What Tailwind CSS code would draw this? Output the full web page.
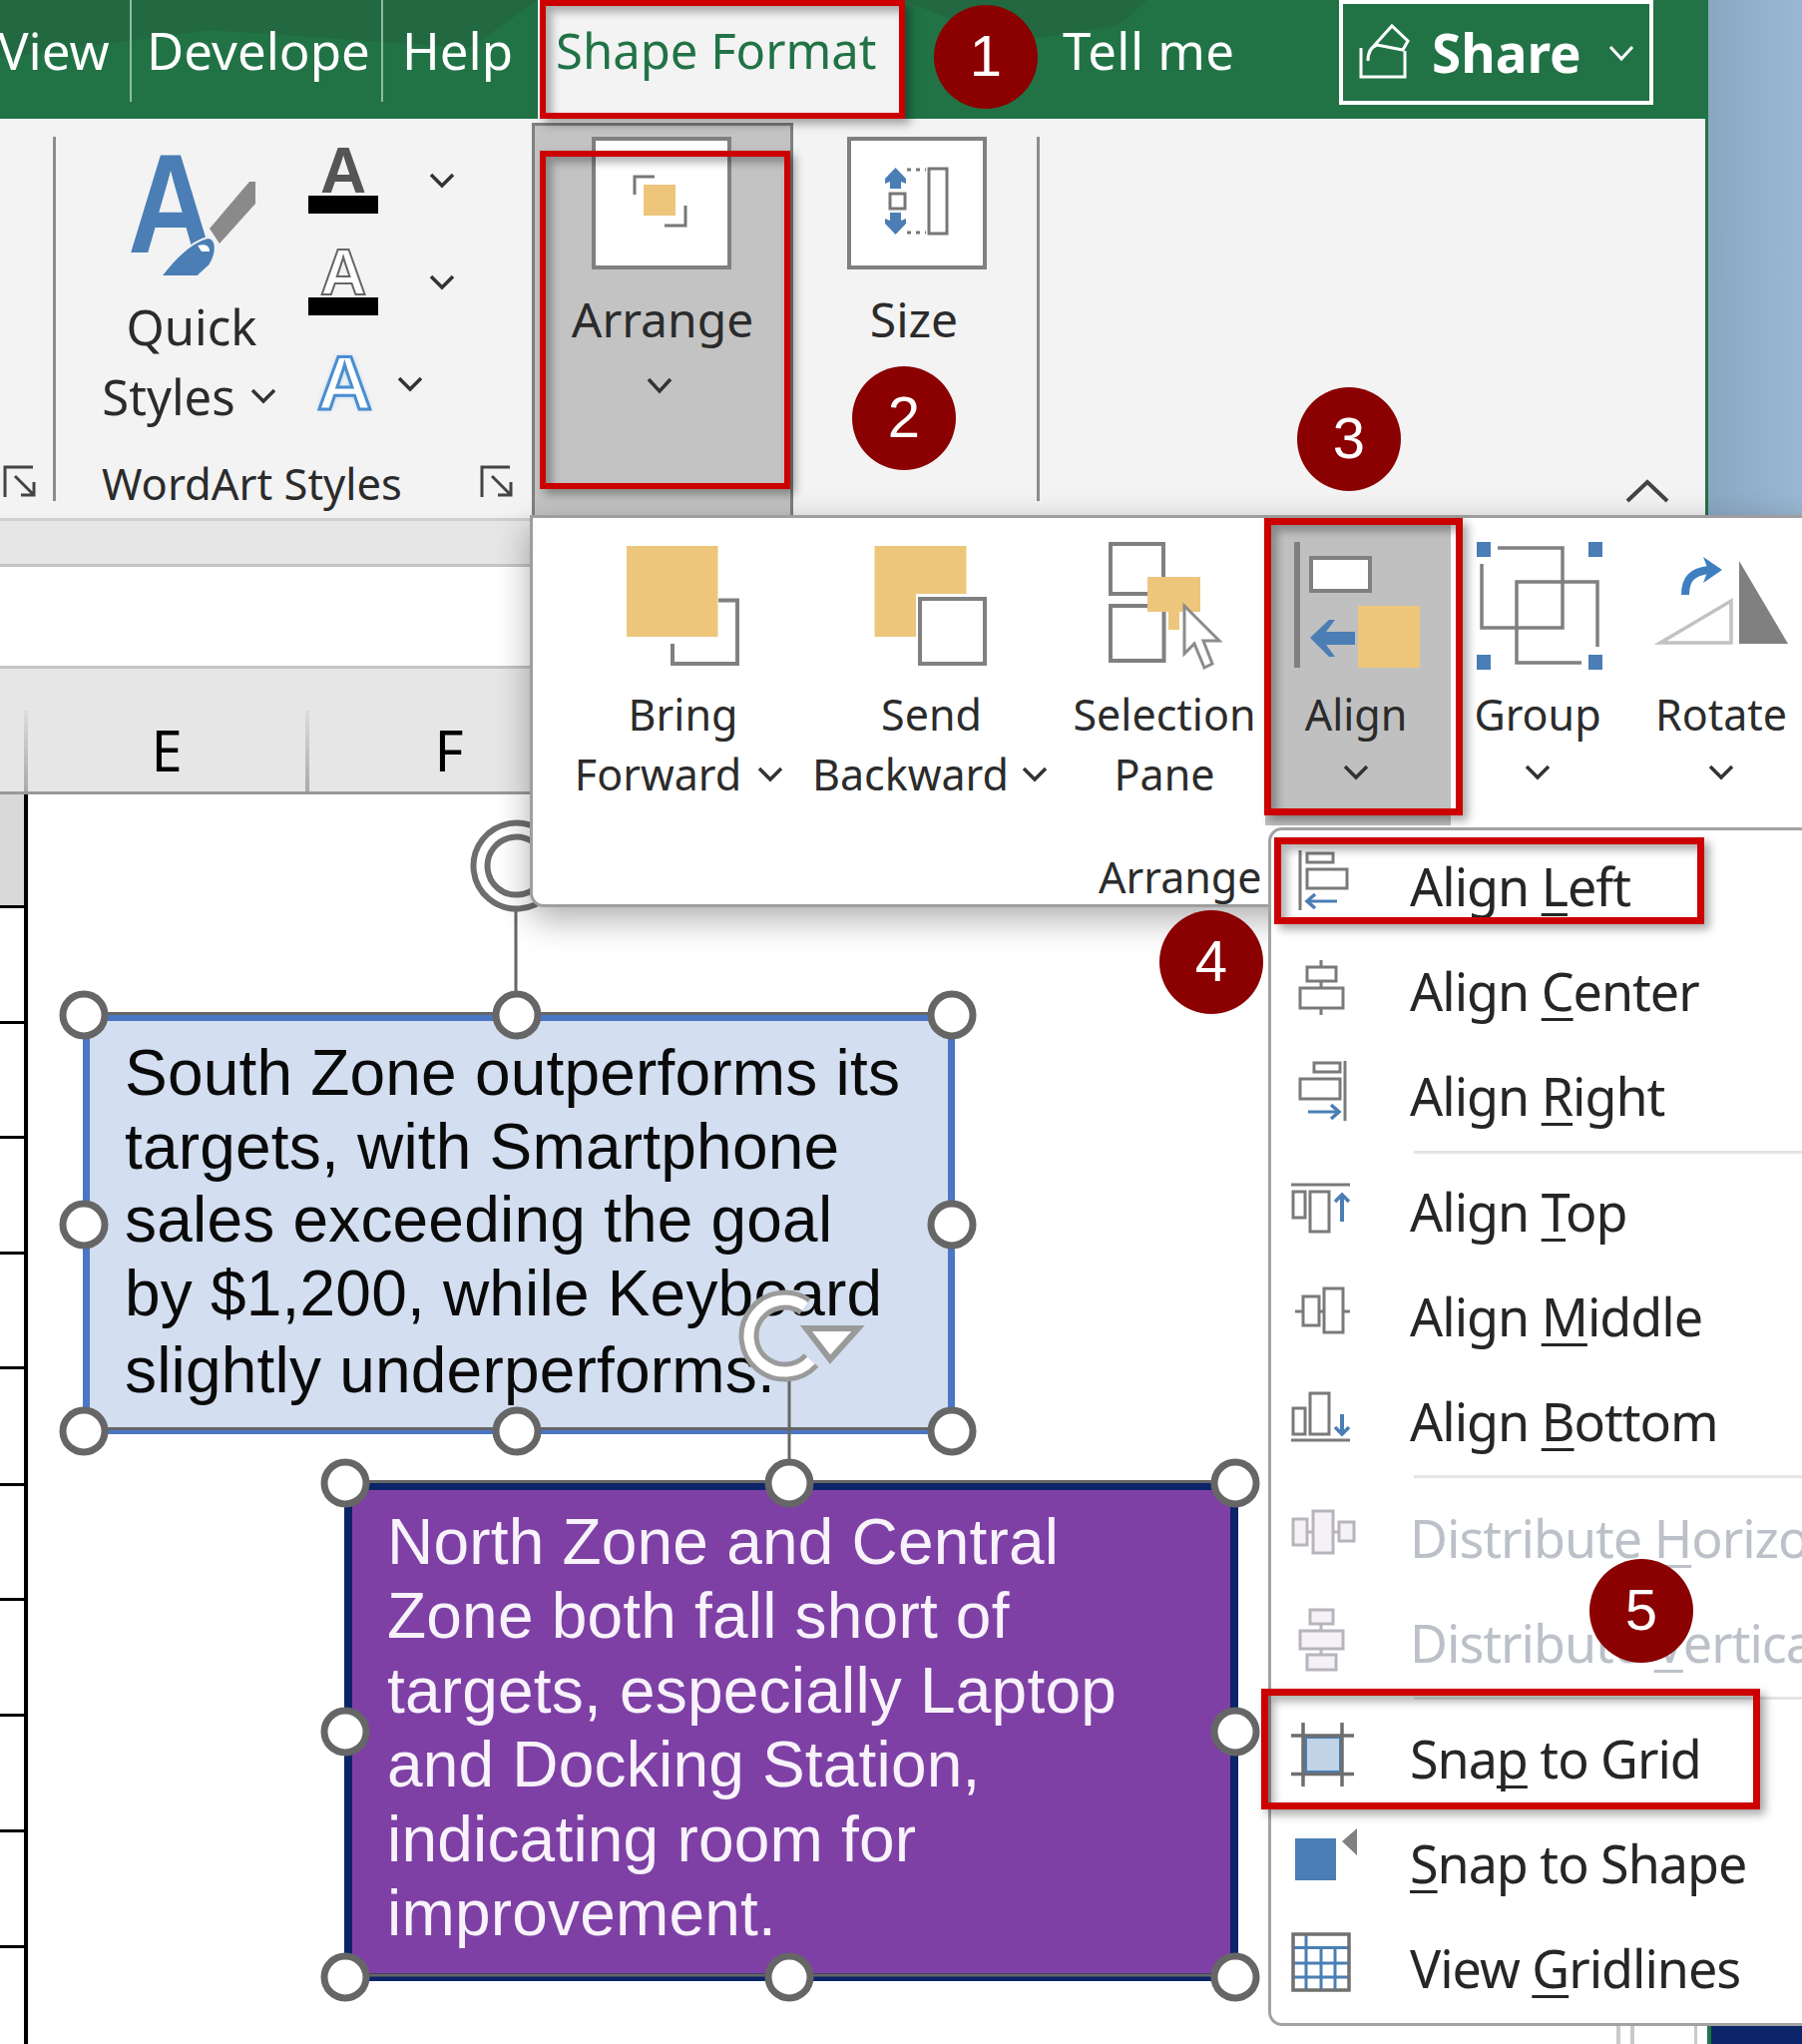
<!DOCTYPE html>
<html lang="en">
<head>
<meta charset="UTF-8">
<title>Shape Format - Align</title>
<script src="https://cdn.jsdelivr.net/npm/@tailwindcss/browser@4"></script>
</head>
<body class="bg-white">
<div class="relative w-[1806px] h-[2048px] overflow-hidden bg-white font-['Noto_Sans',sans-serif] text-[#2b2b2b]">

  <!-- title + ribbon -->
  <div class="flex h-[516px]">
    <div class="w-[1712px] flex flex-col">
      <!-- tabs -->
      <div class="relative flex h-[119px] shrink-0 bg-[#217346] text-[51px] leading-[100px] text-white overflow-hidden">
        <svg class="absolute left-0 top-0 w-[1712px] h-[119px]" viewBox="0 0 1712 119"><polygon points="0,0 540,0 470,48 210,30 0,58" fill="#25603f" fill-opacity=".55"/><polygon points="905,0 1150,0 1120,26 1010,42" fill="#25603f" fill-opacity=".55"/></svg>
        <span class="relative w-[132px] ml-[-2px] shrink-0 pl-0">View</span>
        <span class="relative w-[2px] h-[102px] shrink-0 bg-[#8dbb9f]"></span>
        <span class="relative w-[250px] pl-[15px] shrink-0">Develope</span>
        <span class="relative w-[2px] h-[102px] shrink-0 bg-[#8dbb9f]"></span>
        <span class="relative w-[155px] pl-[19px] shrink-0">Help</span>
        <span class="relative w-[363px] h-[119px] pl-[18px] shrink-0 bg-[#f3f3f3] text-[49px] text-[#217346]">Shape Format</span>
        <span class="relative w-[440px] pl-[163px] shrink-0 tracking-[0.4px]">Tell me</span>
        <div class="relative flex items-center w-[315px] h-[105px] shrink-0 border-[4px] border-white">
          <svg class="ml-[16px] w-[54px] h-[60px] shrink-0" viewBox="0 0 54 60" fill="none" stroke="#fff" stroke-width="3"><path d="M2 25V54H46V28"/><path d="M9 38C9 30 12 24 18 22L44 27L49 18L33 3L14 24"/></svg>
          <span class="ml-[19px] text-[53px] font-bold leading-[90px]">Share</span>
          <svg class="ml-[27px] w-[26px] h-[18px]" viewBox="0 0 26 18" fill="none" stroke="#fff" stroke-width="3"><path d="M2 3L13 15L24 3"/></svg>
        </div>
      </div>
      <!-- ribbon -->
      <div class="flex h-[397px] bg-[#f3f3f3] border-r-[3px] border-[#217346]">
        <div class="w-[53px] shrink-0 pt-[347px] pl-[3px]">
          <svg class="w-[34px] h-[34px]" viewBox="0 0 34 34" fill="none" stroke="#444" stroke-width="3"><path d="M2 32V2H30"/><path d="M12 11L30 29M18 30H31V17"/></svg>
        </div>
        <div class="w-[3px] h-[365px] mt-[18px] shrink-0 bg-[#8c8c8c]"></div>

        <div class="w-[477px] shrink-0 flex flex-col">
          <div class="flex h-[334px]">
            <div class="ml-[34px] w-[200px] pt-[35px] flex flex-col items-center text-[49px] leading-[70px]">
              <div class="relative w-[200px] h-[123px] shrink-0">
                <span class="absolute left-[30px] top-[-20px] font-['Liberation_Sans'] font-bold text-[141px] leading-[141px] text-[#4a7eb5] scale-x-[.84]">A</span>
                <svg class="absolute left-0 top-0 w-[200px] h-[123px]" viewBox="0 0 200 123"><polygon points="120,75 160,28 166,28 166,50 130,90" fill="#8a8a8a"/><path d="M71 123C84 106 102 88 118 84C128 84 128 100 120 112L108 123Z" fill="#4a7eb5" stroke="#f3f3f3" stroke-width="2"/><path d="M108 92C116 90 120 92 120 98L112 98Z" fill="#fff"/></svg>
              </div>
              <div class="mt-[15px] pl-[4px]">Quick</div>
              <div class="flex items-center gap-[14px]">Styles<svg class="w-[28px] h-[16px]" viewBox="0 0 28 16" fill="none" stroke="#333" stroke-width="3.5"><path d="M3 2L14 13L25 2"/></svg></div>
            </div>
            <div class="ml-[19px] pt-[29px] flex flex-col font-['Liberation_Sans'] font-bold">
              <div class="flex">
                <div class="w-[70px] flex flex-col items-center"><span class="h-[46px] text-[64px] leading-[46px] text-[#555]">A</span><span class="w-[70px] h-[18px] mt-[2px] bg-black"></span></div>
                <svg class="ml-[50px] mt-[25px] w-[28px] h-[16px]" viewBox="0 0 28 16" fill="none" stroke="#333" stroke-width="3.5"><path d="M3 2L14 13L25 2"/></svg>
              </div>
              <div class="flex mt-[36px]">
                <div class="w-[70px] flex flex-col items-center"><span class="h-[46px] text-[64px] leading-[46px] text-white [-webkit-text-stroke:2px_#666]">A</span><span class="w-[70px] h-[18px] mt-[2px] bg-black"></span></div>
                <svg class="ml-[50px] mt-[25px] w-[28px] h-[16px]" viewBox="0 0 28 16" fill="none" stroke="#333" stroke-width="3.5"><path d="M3 2L14 13L25 2"/></svg>
              </div>
              <div class="flex mt-[40px] ml-[9px]">
                <span class="w-[51px] h-[56px] text-center text-[76px] leading-[56px] text-white [-webkit-text-stroke:3px_#4a8ed0] [text-shadow:0_0_5px_#8fbce8]">A</span>
                <svg class="ml-[28px] mt-[21px] w-[28px] h-[16px]" viewBox="0 0 28 16" fill="none" stroke="#333" stroke-width="3.5"><path d="M3 2L14 13L25 2"/></svg>
              </div>
            </div>
          </div>
          <div class="flex text-[43.500px] leading-[62px] pl-[46px]">
            <span>WordArt Styles</span>
            <svg class="ml-auto mr-[18px] mt-[13px] w-[34px] h-[34px]" viewBox="0 0 34 34" fill="none" stroke="#444" stroke-width="3"><path d="M2 32V2H30"/><path d="M12 11L30 29M18 30H31V17"/></svg>
          </div>
        </div>

        <!-- Arrange button -->
        <div class="w-[262px] h-[393px] mt-[4px] shrink-0 flex flex-col items-center pt-[11px] bg-[#c3c3c3] border-[3px] border-b-0 border-[#7f7f7f] text-[48px] leading-[60px]">
          <div class="w-[140px] h-[133px] mr-[2px] bg-white border-[4px] border-[#808080] shrink-0">
            <svg class="w-[132px] h-[125px]" viewBox="0 0 132 125" fill="none"><path d="M39 54V36H59" stroke="#777" stroke-width="3"/><rect x="48" y="44" width="32" height="31" fill="#edc67c"/><path d="M69 85H90V65" stroke="#777" stroke-width="3"/></svg>
          </div>
          <div class="mt-[20px]">Arrange</div>
          <svg class="mt-[28px] mr-[6px] w-[28px] h-[18px]" viewBox="0 0 28 18" fill="none" stroke="#333" stroke-width="3.5"><path d="M3 2L14 14L25 2"/></svg>
        </div>

        <!-- Size -->
        <div class="w-[244px] shrink-0 flex flex-col items-center pt-[18px] text-[48px] leading-[60px]">
          <div class="w-[140px] h-[133px] ml-[4px] bg-white border-[4px] border-[#808080] shrink-0">
            <svg class="w-[132px] h-[125px]" viewBox="0 0 132 125"><polygon points="44.500,27 55,38 55,43 50,41 50,48 39,48 39,41 34,43 34,38" fill="#4a7eb5"/><rect x="39" y="53" width="15" height="15" fill="#fff" stroke="#777" stroke-width="3"/><polygon points="44.500,94 55,83 55,78 50,80 50,72 39,72 39,80 34,78 34,83" fill="#4a7eb5"/><path d="M56 29H75M56 92H75" stroke="#777" stroke-width="3" stroke-dasharray="4 5"/><rect x="78" y="28" width="18" height="65" fill="#fff" stroke="#777" stroke-width="3"/></svg>
          </div>
          <div class="mt-[20px] mr-[2px]">Size</div>
        </div>
        <div class="w-[3px] h-[365px] mt-[18px] shrink-0 bg-[#8c8c8c]"></div>
        <div class="flex-1 flex justify-end items-start pt-[361px] pr-[36px]">
          <svg class="w-[44px] h-[24px]" viewBox="0 0 44 24" fill="none" stroke="#444" stroke-width="4"><path d="M2 22L22 3L42 22"/></svg>
        </div>
      </div>
    </div>
    <div class="flex-1 bg-gradient-to-r from-[#8aa7c2] to-[#9ab8d4]"></div>
  </div>

  <!-- band under the ribbon -->
  <div class="h-[6px] bg-[#f0f0f0] border-b-[3px] border-[#cfcfcf]"></div>
  <div class="h-[46px] bg-[#e6e6e6] border-b-[3px] border-[#c4c4c4]"></div>
  <div class="h-[102px] bg-white border-b-[3px] border-[#c4c4c4]"></div>
  <!-- column header -->
  <div class="flex h-[126px] bg-[#e6e6e6] border-b-[3px] border-[#999] text-[56px] leading-[118px] text-black">
    <div class="w-[24px] shrink-0"></div>
    <div class="w-[4px] h-[81px] mt-[42px] shrink-0 bg-gradient-to-b from-[#dcdcdc] to-[#aaa]"></div>
    <div class="w-[278px] text-center pt-[22px]">E</div>
    <div class="w-[4px] h-[81px] mt-[42px] shrink-0 bg-gradient-to-b from-[#dcdcdc] to-[#aaa]"></div>
    <div class="w-[280px] text-center pt-[22px]">F</div>
  </div>
  <!-- row header -->
  <div class="flex">
    <div class="w-[28px] shrink-0 border-r-[4px] border-black h-[1253px]">
      <div class="h-[114px] bg-[#d9d9d9] border-b-[3px] border-black"></div>
      <div class="h-[116px] border-b-[3px] border-black"></div>
      <div class="h-[115px] border-b-[3px] border-black"></div>
      <div class="h-[116px] border-b-[3px] border-black"></div>
      <div class="h-[115px] border-b-[3px] border-black"></div>
      <div class="h-[117px] border-b-[3px] border-black"></div>
      <div class="h-[115px] border-b-[3px] border-black"></div>
      <div class="h-[116px] border-b-[3px] border-black"></div>
      <div class="h-[116px] border-b-[3px] border-black"></div>
      <div class="h-[116px] border-b-[3px] border-black"></div>
    </div>
  </div>

  <!-- what shows past the bottom of the menu -->
  <div class="absolute left-[1620px] top-[2028px] w-[4px] h-[20px] bg-[#c9c9c9]"></div>
  <div class="absolute left-[1634px] top-[2028px] w-[4px] h-[20px] bg-[#c9c9c9]"></div>
  <div class="absolute left-[1698px] top-[2028px] w-[3px] h-[20px] bg-[#c9c9c9]"></div>
  <div class="absolute left-[1711px] top-[2028px] w-[4px] h-[20px] bg-[#217346]"></div>
  <div class="absolute left-[1715px] top-[2028px] w-[91px] h-[20px] bg-[#0c2468]"></div>

  <!-- text boxes on the sheet -->
  <div class="absolute left-[83px] top-[1016px] w-[874px] h-[421px] bg-[#d3def0] border-[7px] border-[#4a76c4] pl-[35px] pt-[16px] font-['Liberation_Sans',sans-serif] text-[64px] tracking-[0.2px] leading-[73.600px] text-[#0a0a0a] whitespace-nowrap">South Zone outperforms its<br>targets, with Smartphone<br>sales exceeding the goal<br>by $1,200, while Keyboard<br><span class="block mt-[4px]">slightly underperforms.</span></div>
  <div class="absolute left-[345px] top-[1485px] w-[896px] h-[500px] bg-[#7e40a5] border-[8px] border-[#0c2468] pl-[35px] pt-[15px] font-['Liberation_Sans',sans-serif] text-[64px] tracking-[0.2px] leading-[74.400px] text-[#f8f2fb] whitespace-nowrap">North Zone and Central<br>Zone both fall short of<br>targets, especially Laptop<br>and Docking Station,<br>indicating room for<br>improvement.</div>

  <!-- selection handles -->
  <svg class="absolute left-0 top-0 w-[1806px] h-[2048px]" viewBox="0 0 1806 2048">
    <g stroke="#666" stroke-width="3" fill="none">
      <path d="M84 1015.500H953M84 1431.500H953"/>
      <path d="M346 1484.500H1238M346 1979H1238"/>
      <path d="M517 913V995M791 1378V1464"/>
    </g>
    <g fill="none">
      <path d="M538 838A36 36 0 1 0 544 892" stroke="#6e6e6e" stroke-width="20"/>
      <path d="M538 838A36 36 0 1 0 544 892" stroke="#fff" stroke-width="8"/>
      <path d="M807 1309A36 36 0 1 0 813 1363" stroke="#9a9a9a" stroke-width="20"/>
      <path d="M807 1309A36 36 0 1 0 813 1363" stroke="#fff" stroke-width="10"/>
    </g>
    <polygon points="808,1331 860,1331 832,1362" fill="#fff" stroke="#9a9a9a" stroke-width="6"/>
    <g fill="#fff" stroke="#666" stroke-width="7">
      <circle cx="84" cy="1017" r="21"/><circle cx="518" cy="1017" r="21"/><circle cx="954" cy="1017" r="21"/>
      <circle cx="84" cy="1227" r="21"/><circle cx="954" cy="1227" r="21"/>
      <circle cx="84" cy="1434" r="21"/><circle cx="518" cy="1434" r="21"/><circle cx="954" cy="1434" r="21"/>
      <circle cx="346" cy="1486" r="21"/><circle cx="791" cy="1486" r="21"/><circle cx="1238" cy="1486" r="21"/>
      <circle cx="346" cy="1735" r="21"/><circle cx="1238" cy="1735" r="21"/>
      <circle cx="346" cy="1981" r="21"/><circle cx="791" cy="1981" r="21"/><circle cx="1238" cy="1981" r="21"/>
    </g>
  </svg>

  <!-- Arrange dropdown -->
  <div class="absolute left-[531px] top-[516px] w-[1290px] h-[393px] bg-white border-[3px] border-[#9e9e9e] rounded-bl-[14px] shadow-[0_12px_34px_rgba(0,0,0,.32)] flex flex-col text-[43px] leading-[60px]">
    <div class="absolute left-[734px] top-0 w-[186px] h-[308px] bg-[#c0c0c0]"></div>
    <div class="relative flex pt-[21px] text-center">
      <div class="ml-[36px] w-[225px] flex flex-col items-center">
        <svg class="w-[130px] h-[135px] overflow-visible" viewBox="0 0 130 135" fill="none"><rect x="10" y="7" width="91.500" height="91" fill="#edc67c"/><path d="M102 61.500H121V125H56V105" stroke="#808080" stroke-width="4"/></svg>
        <div class="mt-[11px] ml-[4px]">Bring</div>
        <div class="flex items-center gap-[16px] pr-[4px]">Forward<svg class="w-[26px] h-[16px]" viewBox="0 0 26 16" fill="none" stroke="#333" stroke-width="3.500"><path d="M2 2L13 13L24 2"/></svg></div>
      </div>
      <div class="ml-[10px] w-[257px] flex flex-col items-center">
        <svg class="w-[130px] h-[135px] overflow-visible" viewBox="0 0 130 135" fill="none"><rect x="7.500" y="7" width="92" height="91" fill="#edc67c"/><rect x="49" y="55" width="75" height="75" fill="#fff"/><rect x="53" y="60" width="65" height="65" stroke="#808080" stroke-width="4"/></svg>
        <div class="mt-[11px]">Send</div>
        <div class="flex items-center gap-[13px] pr-[3px]">Backward<svg class="w-[26px] h-[16px]" viewBox="0 0 26 16" fill="none" stroke="#333" stroke-width="3.500"><path d="M2 2L13 13L24 2"/></svg></div>
      </div>
      <div class="ml-[5px] w-[200px] flex flex-col items-center">
        <svg class="w-[130px] h-[135px] overflow-visible" viewBox="0 0 130 135" fill="none"><path d="M48 55H11V5H64V38" stroke="#808080" stroke-width="4"/><rect x="11" y="67" width="53.500" height="55" stroke="#808080" stroke-width="4"/><rect x="48" y="38" width="53" height="35" fill="#edc67c"/><rect x="69" y="73" width="11" height="18" fill="#edc67c"/><polygon points="85,67 85,115 95,105 105,129 113,125 104,102 120,102" fill="#fff" stroke="#8c8c8c" stroke-width="3"/></svg>
        <div class="mt-[11px]">Selection</div>
        <div>Pane</div>
      </div>
      <div class="w-[184px] flex flex-col items-center">
        <svg class="w-[130px] h-[135px] overflow-visible" viewBox="0 0 130 135" fill="none"><path d="M6 3V129" stroke="#808080" stroke-width="6"/><rect x="20" y="19" width="59" height="33" fill="#fff" stroke="#808080" stroke-width="4"/><rect x="67" y="67" width="62" height="62" fill="#edc67c"/><polygon points="19,99 38,81 44,81 35,93 64,93 64,106 35,106 44,118 38,118" fill="#4a7eb5"/></svg>
        <div class="mt-[11px]">Align</div>
        <div class="flex h-[60px] items-center"><svg class="w-[28px] h-[16px] mt-[-4px]" viewBox="0 0 28 16" fill="none" stroke="#333" stroke-width="3.500"><path d="M3 2L14 13L25 2"/></svg></div>
      </div>
      <div class="ml-[14px] w-[152px] flex flex-col items-center">
        <svg class="w-[130px] h-[135px] overflow-visible" viewBox="0 0 130 135" fill="none"><rect x="4" y="3" width="14" height="15" fill="#4a7eb5"/><rect x="116" y="3" width="14" height="15" fill="#4a7eb5"/><rect x="4" y="116" width="14" height="15" fill="#4a7eb5"/><rect x="116" y="116" width="14" height="15" fill="#4a7eb5"/><path d="M25 9H90V89H9V25M125 108V43H44V124H109" stroke="#808080" stroke-width="3.500"/></svg>
        <div class="mt-[11px]">Group</div>
        <div class="flex h-[60px] items-center"><svg class="w-[28px] h-[16px] mt-[-4px]" viewBox="0 0 28 16" fill="none" stroke="#333" stroke-width="3.500"><path d="M3 2L14 13L25 2"/></svg></div>
      </div>
      <div class="ml-[23px] w-[170px] flex flex-col items-center">
        <svg class="w-[130px] h-[135px] overflow-visible" viewBox="0 0 130 135" fill="none"><polygon points="83,22 83,105 132,105" fill="#808080"/><polygon points="4,104 75,62 75,104" stroke="#c2c2c2" stroke-width="3.500"/><path d="M29 56C29 40 36 33 52 31" stroke="#3f7fc0" stroke-width="8"/><polygon points="47,18 66,31 47,44 52,31" fill="#3f7fc0"/></svg>
        <div class="mt-[11px]">Rotate</div>
        <div class="flex h-[60px] items-center"><svg class="w-[28px] h-[16px] mt-[-4px]" viewBox="0 0 28 16" fill="none" stroke="#333" stroke-width="3.500"><path d="M3 2L14 13L25 2"/></svg></div>
      </div>
    </div>
    <div class="mt-auto mb-[-3px] pl-[567px]">Arrange</div>
  </div>

  <!-- Align menu -->
  <div class="absolute left-[1271px] top-[829px] w-[600px] h-[1201px] bg-white border-[3px] border-[#a3a3a3] rounded-l-[14px] pt-[3px] text-[52px] tracking-[-1px] text-[#262626] leading-[60px] whitespace-nowrap [text-decoration-skip-ink:none]">
    <div class="flex h-[105px]">
      <svg class="ml-[16px] mt-[5px] w-[80px] h-[80px] shrink-0" viewBox="0 0 80 80" fill="none" stroke="#7a7a7a" stroke-width="3"><path d="M13 12V72"/><rect x="20" y="15" width="26" height="9"/><rect x="20" y="31" width="40" height="19"/><path d="M20 63H50" stroke="#4a7eb5"/><path d="M28 56L20 63L28 70" stroke="#4a7eb5" stroke-width="3.500"/></svg>
      <span class="ml-[43px] self-center">Align <u class="underline-offset-[7px] decoration-[3px]">L</u>eft</span>
    </div>
    <div class="flex h-[105px]">
      <svg class="ml-[16px] mt-[5px] w-[80px] h-[80px] shrink-0" viewBox="0 0 80 80" fill="none" stroke="#7a7a7a" stroke-width="3"><path d="M34 17V24M34 38V45M34 65V72"/><rect x="20" y="24" width="29" height="14"/><rect x="13" y="45" width="43" height="20"/></svg>
      <span class="ml-[43px] self-center">Align <u class="underline-offset-[7px] decoration-[3px]">C</u>enter</span>
    </div>
    <div class="flex h-[105px]">
      <svg class="ml-[16px] mt-[5px] w-[80px] h-[80px] shrink-0" viewBox="0 0 80 80" fill="none" stroke="#7a7a7a" stroke-width="3"><path d="M58 13V73"/><rect x="27" y="15" width="26" height="9"/><rect x="13" y="31" width="40" height="20"/><path d="M21 64H52" stroke="#4a7eb5"/><path d="M44 57L52 64L44 71" stroke="#4a7eb5" stroke-width="3.500"/></svg>
      <span class="ml-[43px] self-center">Align <u class="underline-offset-[7px] decoration-[3px]">R</u>ight</span>
    </div>
    <div class="ml-[143px] h-[3px] mt-[3px] mb-[5px] bg-[#e4e4e4]"></div>
    <div class="flex h-[105px]">
      <svg class="ml-[16px] mt-[3px] w-[80px] h-[80px] shrink-0" viewBox="0 0 80 80" fill="none" stroke="#7a7a7a" stroke-width="3"><path d="M4 23H63"/><rect x="6" y="30" width="12" height="26"/><rect x="23" y="30" width="19" height="40"/><path d="M55 60V33" stroke="#4a7eb5" stroke-width="4"/><path d="M48 40L55 33L62 40" stroke="#4a7eb5" stroke-width="3.500"/></svg>
      <span class="ml-[43px] self-center">Align <u class="underline-offset-[7px] decoration-[3px]">T</u>op</span>
    </div>
    <div class="flex h-[105px]">
      <svg class="ml-[16px] mt-[3px] w-[80px] h-[80px] shrink-0" viewBox="0 0 80 80" fill="none" stroke="#7a7a7a" stroke-width="3"><path d="M8 45H15M32 45H36M56 45H63"/><rect x="16" y="30" width="16" height="29"/><rect x="37" y="22" width="19" height="44"/></svg>
      <span class="ml-[43px] self-center">Align <u class="underline-offset-[7px] decoration-[3px]">M</u>iddle</span>
    </div>
    <div class="flex h-[105px]">
      <svg class="ml-[16px] mt-[3px] w-[80px] h-[80px] shrink-0" viewBox="0 0 80 80" fill="none" stroke="#7a7a7a" stroke-width="3"><path d="M4 69H63"/><rect x="6" y="37" width="12" height="26"/><rect x="23" y="22" width="19" height="41"/><path d="M55 43V63" stroke="#4a7eb5" stroke-width="4"/><path d="M48 56L55 63L62 56" stroke="#4a7eb5" stroke-width="3.500"/></svg>
      <span class="ml-[43px] self-center">Align <u class="underline-offset-[7px] decoration-[3px]">B</u>ottom</span>
    </div>
    <div class="ml-[143px] h-[3px] mt-[2px] mb-[7px] bg-[#e4e4e4]"></div>
    <div class="flex h-[105px] text-[#bcc0c8]">
      <svg class="ml-[16px] mt-[3px] w-[80px] h-[80px] shrink-0" viewBox="0 0 80 80" fill="#f5f2f7" stroke="#b8b4bc" stroke-width="3"><path d="M20 44H26M46 44H51"/><rect x="6" y="31" width="14" height="26"/><rect x="26" y="23" width="20" height="42"/><rect x="52" y="34" width="15" height="19"/></svg>
      <span class="ml-[43px] self-center">Distribute <u class="underline-offset-[7px] decoration-[3px]">H</u>orizontally</span>
    </div>
    <div class="flex h-[105px] text-[#bcc0c8]">
      <svg class="ml-[16px] mt-[3px] w-[80px] h-[80px] shrink-0" viewBox="0 0 80 80" fill="#f5f2f7" stroke="#b8b4bc" stroke-width="3"><path d="M34 31V38M34 56V62"/><rect x="23" y="17" width="23" height="14"/><rect x="13" y="38" width="43" height="18"/><rect x="20" y="62" width="29" height="15"/></svg>
      <span class="ml-[43px] self-center">Distribute <u class="underline-offset-[7px] decoration-[3px]">V</u>ertically</span>
    </div>
    <div class="ml-[143px] h-[3px] mt-[2px] mb-[6px] bg-[#e4e4e4]"></div>
    <div class="flex h-[105px]">
      <svg class="ml-[16px] mt-[3px] w-[80px] h-[80px] shrink-0" viewBox="0 0 80 80" fill="none"><rect x="18" y="28" width="36" height="36" fill="#c1d3e6" stroke="#4a7eb5" stroke-width="4"/><path d="M16 14V78M55 14V78M4 27H67M4 65.500H67" stroke="#6e6e6e" stroke-width="3.500"/></svg>
      <span class="ml-[43px] self-center">Sna<u class="underline-offset-[7px] decoration-[3px]">p</u> to Grid</span>
    </div>
    <div class="flex h-[105px]">
      <svg class="ml-[16px] mt-[3px] w-[80px] h-[80px] shrink-0" viewBox="0 0 80 80"><rect x="8" y="25" width="41" height="42" fill="#4a7eb5"/><polygon points="55,28 70,15 70,42" fill="#808080"/></svg>
      <span class="ml-[43px] self-center"><u class="underline-offset-[7px] decoration-[3px]">S</u>nap to Shape</span>
    </div>
    <div class="flex h-[105px]">
      <svg class="ml-[16px] mt-[3px] w-[80px] h-[80px] shrink-0" viewBox="0 0 80 80" fill="none"><path d="M19 17V72M34 29V72M48 29V72M6 29.500H62M6 45H62M6 59H62" stroke="#4a7eb5" stroke-width="3"/><rect x="6" y="16" width="56" height="56" stroke="#707070" stroke-width="3.500"/></svg>
      <span class="ml-[43px] self-center">View <u class="underline-offset-[7px] decoration-[3px]">G</u>ridlines</span>
    </div>
  </div>

  <!-- red callout boxes -->
  <div class="absolute left-[541px] top-0 w-[366px] h-[119px] border-[6px] border-[#cc0000] shadow-[5px_5px_9px_rgba(0,0,0,.35),inset_6px_6px_9px_rgba(0,0,0,.3)]"></div>
  <div class="absolute left-[541px] top-[151px] w-[251px] h-[339px] border-[6px] border-[#cc0000] shadow-[5px_5px_9px_rgba(0,0,0,.35),inset_6px_6px_9px_rgba(0,0,0,.3)]"></div>
  <div class="absolute left-[1267px] top-[519px] w-[199px] h-[298px] border-[7px] border-[#cc0000] shadow-[5px_5px_9px_rgba(0,0,0,.35),inset_6px_6px_9px_rgba(0,0,0,.3)]"></div>
  <div class="absolute left-[1277px] top-[839px] w-[431px] h-[87px] border-[7px] border-[#cc0000] shadow-[5px_5px_9px_rgba(0,0,0,.35),inset_6px_6px_9px_rgba(0,0,0,.3)]"></div>
  <div class="absolute left-[1264px] top-[1692px] w-[500px] h-[121px] border-[7px] border-[#cc0000] shadow-[5px_5px_9px_rgba(0,0,0,.35),inset_6px_6px_9px_rgba(0,0,0,.3)]"></div>

  <!-- step badges -->
  <div class="absolute left-[936px] top-[5px] w-[104px] h-[104px] pb-[4px] rounded-full bg-[#8b0000] flex items-center justify-center font-['Liberation_Sans'] text-[58px] text-white">1</div>
  <div class="absolute left-[854px] top-[367px] w-[104px] h-[104px] pb-[4px] rounded-full bg-[#8b0000] flex items-center justify-center font-['Liberation_Sans'] text-[58px] text-white">2</div>
  <div class="absolute left-[1300px] top-[388px] w-[104px] h-[104px] pb-[4px] rounded-full bg-[#8b0000] flex items-center justify-center font-['Liberation_Sans'] text-[58px] text-white">3</div>
  <div class="absolute left-[1162px] top-[912px] w-[104px] h-[104px] pb-[4px] rounded-full bg-[#8b0000] flex items-center justify-center font-['Liberation_Sans'] text-[58px] text-white">4</div>
  <div class="absolute left-[1593px] top-[1562px] w-[104px] h-[104px] pb-[4px] rounded-full bg-[#8b0000] flex items-center justify-center font-['Liberation_Sans'] text-[58px] text-white">5</div>
</div>
</body>
</html>
